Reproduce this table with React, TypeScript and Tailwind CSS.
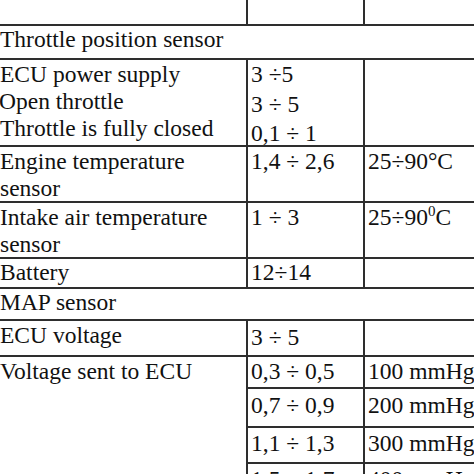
import React from "react";

const B = "border-[#2e2e2e]";

function Cell({ w, children, last, className = "" }: { w?: string; children?: React.ReactNode; last?: boolean; className?: string }) {
  return (
    <div className={`${w ?? "flex-1"} ${last ? "" : "border-r-2"} ${B} ${className} h-full shrink-0`}>
      {children}
    </div>
  );
}

export default function App() {
  return (
    <div
      className="w-[474px] h-[474px] overflow-hidden bg-white text-[#111] text-[23.5px] leading-[27px]"
      style={{ fontFamily: '"Liberation Serif", "Times New Roman", serif' }}
    >
      <div className="w-[520px]">
        {/* top empty row */}
        <div className={`flex h-[26px] border-b-2 ${B}`}>
          <Cell w="w-[248px]" />
          <Cell w="w-[117px]" />
          <Cell last />
        </div>
        {/* Throttle position sensor */}
        <div className={`flex h-[34px] border-b-2 ${B}`}>
          <div>Throttle position sensor</div>
        </div>
        {/* ECU power supply block */}
        <div className={`flex h-[87px] border-b-2 ${B}`}>
          <Cell w="w-[248px]" className="pt-[1px]">
            <div>ECU power supply</div>
            <div className="-ml-[1px]">Open throttle</div>
            <div>Throttle is fully closed</div>
          </Cell>
          <Cell w="w-[117px]" className="pl-[3px] leading-[29.5px]">
            <div>3 ÷5</div>
            <div>3 ÷ 5</div>
            <div>0,1 ÷ 1</div>
          </Cell>
          <Cell last />
        </div>
        {/* Engine temperature */}
        <div className={`flex h-[56px] border-b-2 ${B}`}>
          <Cell w="w-[248px]" className="pt-[1px]">
            Engine temperature
            <br />
            sensor
          </Cell>
          <Cell w="w-[117px]" className="pl-[3px] pt-[1px]">1,4 ÷ 2,6</Cell>
          <Cell last className="pl-[3px] pt-[1px]">25÷90°C</Cell>
        </div>
        {/* Intake air */}
        <div className={`flex h-[56px] border-b-2 ${B}`}>
          <Cell w="w-[248px]" className="pt-[1px]">
            Intake air temperature
            <br />
            sensor
          </Cell>
          <Cell w="w-[117px]" className="pl-[3px] pt-[1px]">1 ÷ 3</Cell>
          <Cell last className="pl-[3px] pt-[1px]">
            25÷90<sup className="text-[15px] -top-[9px]">0</sup>C
          </Cell>
        </div>
        {/* Battery */}
        <div className={`flex h-[30px] border-b-2 ${B}`}>
          <Cell w="w-[248px]">Battery</Cell>
          <Cell w="w-[117px]" className="pl-[3px]">12÷14</Cell>
          <Cell last />
        </div>
        {/* MAP sensor */}
        <div className={`flex h-[32px] border-b-2 ${B}`}>
          <div>MAP sensor</div>
        </div>
        {/* ECU voltage */}
        <div className={`flex h-[36px] border-b-2 ${B}`}>
          <Cell w="w-[248px]" className="pt-[1px]">ECU voltage</Cell>
          <Cell w="w-[117px]" className="pl-[3px] pt-[3px]">3 ÷ 5</Cell>
          <Cell last />
        </div>
        {/* Voltage sent to ECU block */}
        <div className="flex">
          <div className={`w-[248px] shrink-0 border-r-2 ${B} pt-[1px]`}>Voltage sent to ECU</div>
          <div className="flex-1 flex flex-col">
            {[
              ["0,3 ÷ 0,5", "100 mmHg", "h-[32px]", "pt-[1px]"],
              ["0,7 ÷ 0,9", "200 mmHg", "h-[39px]", "pt-[3px]"],
              ["1,1 ÷ 1,3", "300 mmHg", "h-[36px]", "pt-[2px]"],
              ["1,5 ÷ 1,7", "400 mmHg", "h-[36px]", "pt-[2px]"],
            ].map(([a, b, h, pt]) => (
              <div key={a} className={`flex ${h} border-b-2 ${B}`}>
                <Cell w="w-[117px]" className={`pl-[3px] ${pt}`}>{a}</Cell>
                <Cell last className={`pl-[3px] ${pt}`}>{b}</Cell>
              </div>
            ))}
          </div>
        </div>
      </div>
    </div>
  );
}
